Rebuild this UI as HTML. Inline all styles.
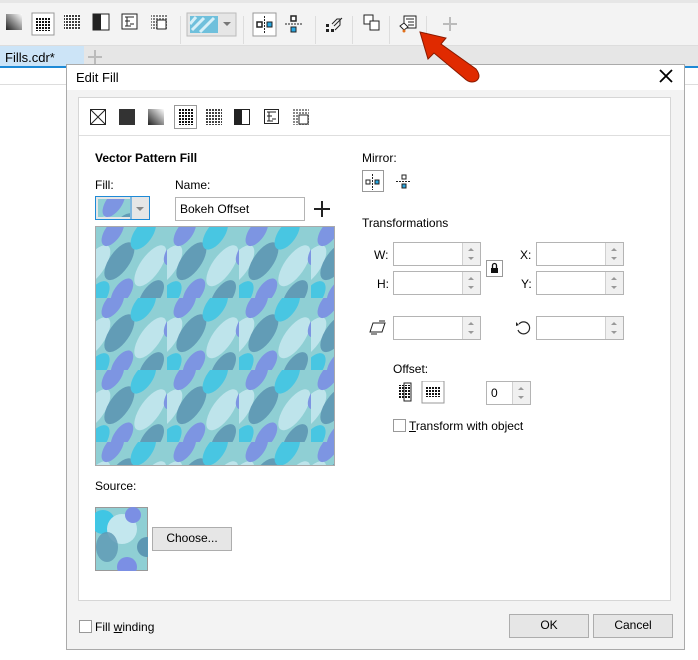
<!DOCTYPE html>
<html><head><meta charset="utf-8"><style>
*{box-sizing:border-box;margin:0;padding:0}
body{width:698px;height:660px;overflow:hidden;background:#fff;font-family:"Liberation Sans",sans-serif;font-size:12px;color:#000;position:relative}
.a{position:absolute}
.inp{position:absolute;background:#fff;border:1px solid #b4b4b4;height:24px}
.spin{position:absolute;right:0;top:0;width:18px;height:100%;background:#f0f0f0;border-left:1px solid #d0d0d0}
.spin:before,.spin:after{content:"";position:absolute;left:5px;border-left:3px solid transparent;border-right:3px solid transparent}
.spin:before{top:5px;border-bottom:3px solid #999}
.spin:after{bottom:5px;border-top:3px solid #999}
.btn{position:absolute;background:#e6e6e6;border:1px solid #adadad;text-align:center;line-height:21px}
.chk{position:absolute;width:13px;height:13px;border:1px solid #555;background:#fff}
.ib{position:absolute;width:22px;height:22px;border:1px solid #999;background:#fff}
</style></head><body>
<svg width="0" height="0" style="position:absolute"><defs>
<pattern id="pt" width="72" height="72" patternUnits="userSpaceOnUse">
<rect width="72" height="72" fill="#8fcfd4"/>
<g transform="rotate(-55 36 36)" opacity="0.9">
<ellipse cx="12" cy="8" rx="24" ry="10" fill="#c3e7ee"/>
<ellipse cx="50" cy="4" rx="16" ry="8" fill="#7b8fe4"/>
<ellipse cx="30" cy="26" rx="22" ry="10" fill="#5d97b3"/>
<ellipse cx="66" cy="30" rx="18" ry="9" fill="#40c6e4"/>
<ellipse cx="6" cy="46" rx="16" ry="8" fill="#7b8fe4"/>
<ellipse cx="44" cy="54" rx="24" ry="10" fill="#c3e7ee"/>
<ellipse cx="-12" cy="28" rx="18" ry="9" fill="#40c6e4"/>
<ellipse cx="80" cy="8" rx="18" ry="9" fill="#5d97b3"/>
<ellipse cx="20" cy="72" rx="18" ry="9" fill="#5d97b3"/>
<ellipse cx="70" cy="66" rx="16" ry="8" fill="#7b8fe4"/>
<ellipse cx="-20" cy="64" rx="22" ry="10" fill="#5d97b3"/>
</g></pattern>
<pattern id="gr" width="3" height="3" patternUnits="userSpaceOnUse"><rect width="3" height="3" fill="#fff"/><rect width="2" height="2" fill="#111"/></pattern>
<linearGradient id="lg" x1="0" y1="1" x2="1" y2="0"><stop offset="0" stop-color="#222"/><stop offset="1" stop-color="#fff"/></linearGradient>
</defs></svg>

<!-- toolbar -->
<div class="a" style="left:0;top:0;width:698px;height:46px;background:#f3f3f3;border-top:3px solid #e6e6e6;border-bottom:1px solid #ddd"></div>
<svg class="a" style="left:0;top:0" width="470" height="46">
<rect x="6" y="14" width="16" height="16" fill="url(#lg)"/>
<rect x="32" y="13" width="22" height="22" fill="#fff" stroke="#999"/>
<rect x="36" y="17" width="14" height="14" fill="url(#gr)"/>
<rect x="64" y="14" width="16" height="16" fill="url(#gr)" opacity=".8"/>
<rect x="93" y="14" width="16" height="16" fill="#fff" stroke="#222"/><rect x="93" y="14" width="8" height="16" fill="#222"/>
<rect x="122" y="14" width="15" height="15" fill="#fff" stroke="#222"/><path d="M125 17h9M125 21h5M130 24h4M125 26h6M127 17v9" stroke="#222" fill="none"/>
<rect x="151" y="14" width="16" height="16" fill="url(#gr)" opacity=".5"/><rect x="157" y="20" width="9" height="9" fill="#fff" stroke="#222"/>
<rect x="180" y="16" width="1" height="28" fill="#ddd"/>
<rect x="187" y="13" width="49" height="23" fill="#e6e6e6" stroke="#bbb"/>
<rect x="190" y="16" width="28" height="17" fill="#6fc0dc"/><path d="M192 30l12-12M200 32l14-14M190 24l6-7" stroke="#d6f0f8" stroke-width="3"/>
<path d="M223 22h8l-4 4z" fill="#777"/>
<rect x="243" y="16" width="1" height="28" fill="#ddd"/>
<rect x="253" y="13" width="23" height="23" fill="#fff" stroke="#999"/>
<rect x="257" y="22" width="5" height="5" fill="#fff" stroke="#222" stroke-width="1.5"/><rect x="267" y="22" width="5" height="5" fill="#2aa7e0" stroke="#222"/><path d="M264.5 16v17" stroke="#222" stroke-dasharray="2 1"/>
<rect x="291" y="16" width="5" height="5" fill="#fff" stroke="#222" stroke-width="1.5"/><rect x="291" y="27" width="5" height="5" fill="#2aa7e0" stroke="#222"/><path d="M285 24h17" stroke="#222" stroke-dasharray="2 1"/>
<rect x="315" y="16" width="1" height="28" fill="#ddd"/>
<path d="M332 24l5-5h3v6l-5 5M334 26l8-8" stroke="#222" fill="none"/><rect x="326" y="29" width="3" height="3" fill="#222"/><rect x="331" y="29" width="3" height="3" fill="#222"/><rect x="326" y="24" width="3" height="3" fill="#222"/>
<rect x="352" y="16" width="1" height="28" fill="#ddd"/>
<rect x="364" y="15" width="9" height="9" fill="#fff" stroke="#222"/><rect x="370" y="21" width="9" height="9" fill="#fff" stroke="#222"/>
<rect x="389" y="16" width="1" height="28" fill="#ddd"/>
<rect x="404" y="16" width="12" height="12" fill="#fff" stroke="#222"/><path d="M406 19h8M408 22h6M408 25h6" stroke="#222"/><path d="M400 26l4-3 4 4-4 3z" fill="#fff" stroke="#222"/><circle cx="404" cy="31" r="1.5" fill="#e0701c"/>
<rect x="426" y="16" width="1" height="28" fill="#ddd"/>
<path d="M450 17v14M443 24h14" stroke="#bbb" stroke-width="2"/>
</svg>
<!-- tab row -->
<div class="a" style="left:0;top:46px;width:698px;height:21px;background:#e6e6e6"></div>
<div class="a" style="left:0;top:46px;width:84px;height:21px;background:#cce4f7;padding:4px 0 0 5px;font-size:13px">Fills.cdr*</div>
<div class="a" style="left:0;top:66px;width:698px;height:2px;background:#1e8ad6"></div>
<svg class="a" style="left:85px;top:47px" width="20" height="20"><path d="M10 3v14M3 10h14" stroke="#bbb" stroke-width="2"/></svg>
<div class="a" style="left:0;top:68px;width:698px;height:17px;background:#fff;border-bottom:1px solid #ddd"></div>

<!-- dialog -->
<div class="a" style="left:66px;top:64px;width:619px;height:586px;background:#f3f3f3;border:1px solid #aaa"></div>
<div class="a" style="left:67px;top:65px;width:617px;height:25px;background:#fff"></div>
<div class="a" style="left:76px;top:70px;font-size:13px">Edit Fill</div>
<svg class="a" style="left:658px;top:68px" width="16" height="16"><path d="M2 2l12 12M14 2L2 14" stroke="#000" stroke-width="1.8"/></svg>
<div class="a" style="left:78px;top:97px;width:593px;height:504px;background:#fff;border:1px solid #d6d6d6"></div>
<div class="a" style="left:79px;top:135px;width:591px;height:1px;background:#dedede"></div>
<svg class="a" style="left:80px;top:100px" width="250" height="34">
<rect x="10.5" y="9.5" width="15" height="15" fill="#fff" stroke="#222"/><path d="M10.5 9.5l15 15M25.5 9.5l-15 15" stroke="#222"/>
<rect x="39" y="9" width="16" height="16" fill="#333"/>
<rect x="68" y="9" width="16" height="16" fill="url(#lg)"/>
<rect x="94.5" y="5.5" width="22" height="23" fill="#fff" stroke="#999"/><rect x="98" y="9" width="15" height="16" fill="url(#gr)"/>
<rect x="126" y="9" width="16" height="16" fill="url(#gr)" opacity=".8"/>
<rect x="154.5" y="9.5" width="15" height="15" fill="#fff" stroke="#222"/><rect x="154" y="9" width="8" height="16" fill="#222"/>
<rect x="184.5" y="9.5" width="14" height="14" fill="#fff" stroke="#222"/><path d="M187 12h9M187 16h5M192 19h4M187 21h6M189 12v9" stroke="#222" fill="none"/>
<rect x="213" y="9" width="16" height="16" fill="url(#gr)" opacity=".5"/><rect x="219" y="15" width="9" height="9" fill="#fff" stroke="#222"/>
</svg>

<div class="a" style="left:95px;top:151px;font-weight:bold">Vector Pattern Fill</div>
<div class="a" style="left:95px;top:178px">Fill:</div>
<div class="a" style="left:175px;top:178px">Name:</div>
<div class="a" style="left:95px;top:196px;width:55px;height:24px;border:1px solid #1e8ad6;background:#e6e6e6"></div>
<svg class="a" style="left:96px;top:197px" width="54" height="22"><rect x="2" y="2" width="32" height="18" fill="url(#pt)"/><rect x="34.5" y="0" width="1" height="22" fill="#1e8ad6"/><path d="M40 10h8l-4 4z" fill="#888"/></svg>
<div class="inp" style="left:175px;top:197px;width:130px;padding:4px 0 0 4px">Bokeh Offset</div>
<svg class="a" style="left:312px;top:199px" width="20" height="20"><path d="M10 2v16M2 10h16" stroke="#222" stroke-width="2"/></svg>
<svg class="a" style="left:95px;top:226px" width="240" height="240"><rect x=".5" y=".5" width="239" height="239" fill="url(#pt)" stroke="#aaa"/></svg>

<div class="a" style="left:95px;top:479px">Source:</div>
<svg class="a" style="left:95px;top:507px" width="53" height="64"><rect x=".5" y=".5" width="52" height="63" fill="#8fcfd4" stroke="#999"/><circle cx="8" cy="15" r="12" fill="#40c6e4"/><ellipse cx="27" cy="22" rx="15" ry="15" fill="#c3e7ee"/><circle cx="38" cy="8" r="8" fill="#7b8fe4"/><ellipse cx="12" cy="40" rx="11" ry="15" fill="#5d97b3" opacity=".8"/><circle cx="32" cy="60" r="10" fill="#7b8fe4"/><circle cx="52" cy="40" r="10" fill="#5d97b3"/></svg>
<div class="btn" style="left:152px;top:527px;width:80px;height:24px">Choose...</div>

<div class="a" style="left:362px;top:151px">Mirror:</div>
<div class="ib" style="left:362px;top:170px"></div>
<svg class="a" style="left:362px;top:170px" width="50" height="24">
<rect x="4" y="10" width="4" height="4" fill="#fff" stroke="#222"/><rect x="13" y="10" width="4" height="4" fill="#2aa7e0" stroke="#222"/><path d="M10.5 4v16" stroke="#222" stroke-dasharray="2 1"/>
<rect x="40" y="5" width="4" height="4" fill="#fff" stroke="#222"/><rect x="40" y="14" width="4" height="4" fill="#2aa7e0" stroke="#222"/><path d="M34 11.5h14" stroke="#222" stroke-dasharray="2 1"/></svg>
<div class="a" style="left:362px;top:216px">Transformations</div>
<div class="a" style="left:374px;top:248px">W:</div>
<div class="a" style="left:377px;top:277px">H:</div>
<div class="a" style="left:520px;top:248px">X:</div>
<div class="a" style="left:521px;top:277px">Y:</div>
<div class="inp" style="left:393px;top:242px;width:88px"><div class="spin"></div></div>
<div class="inp" style="left:393px;top:271px;width:88px"><div class="spin"></div></div>
<div class="inp" style="left:536px;top:242px;width:88px"><div class="spin"></div></div>
<div class="inp" style="left:536px;top:271px;width:88px"><div class="spin"></div></div>
<div class="inp" style="left:393px;top:316px;width:88px"><div class="spin"></div></div>
<div class="inp" style="left:536px;top:316px;width:88px"><div class="spin"></div></div>
<div class="a" style="left:486px;top:260px;width:17px;height:17px;border:1px solid #999;background:#fff"></div>
<svg class="a" style="left:486px;top:260px" width="17" height="17"><rect x="5" y="8" width="7" height="5" fill="#111"/><path d="M6.5 8V5.5a2 2 0 0 1 4 0V8" stroke="#111" fill="none" stroke-width="1.3"/></svg>
<svg class="a" style="left:368px;top:318px" width="20" height="20"><path d="M5 5h12l-3 9H2z" fill="none" stroke="#222"/><path d="M11 3h6M3 16h6" stroke="#222"/></svg>
<svg class="a" style="left:513px;top:318px" width="20" height="20"><path d="M6 6a6 6 0 1 1 -1 6" fill="none" stroke="#222" stroke-width="1.2"/><path d="M3 4l3 3-3 1z" fill="#222"/></svg>
<div class="a" style="left:393px;top:362px">Offset:</div>
<svg class="a" style="left:396px;top:381px" width="52" height="24">
<rect x="2" y="4" width="12" height="14" fill="url(#gr)"/><rect x="8" y="2" width="7" height="18" fill="none" stroke="#222"/>
<rect x="26" y="0" width="22" height="22" fill="#fff" stroke="#999"/><rect x="30" y="6" width="15" height="10" fill="url(#gr)"/></svg>
<div class="inp" style="left:486px;top:381px;width:45px;padding:4px 0 0 4px">0<div class="spin"></div></div>
<div class="chk" style="left:393px;top:419px;border-color:#999"></div>
<div class="a" style="left:409px;top:419px"><u>T</u>ransform with object</div>

<div class="chk" style="left:79px;top:620px;border-color:#999"></div>
<div class="a" style="left:95px;top:620px">Fill <u>w</u>inding</div>
<div class="btn" style="left:509px;top:614px;width:80px;height:24px">OK</div>
<div class="btn" style="left:593px;top:614px;width:80px;height:24px">Cancel</div>

<!-- red arrow -->
<svg class="a" style="left:410px;top:25px" width="80" height="60">
<path d="M10 7 L36 13 L31 19 L66 44 Q72 52 66 56 Q60 59 54 53 L24 28 L18 34 Z" fill="#e02a00" stroke="#8a1a00" stroke-width="1"/>
</svg>
</body></html>
